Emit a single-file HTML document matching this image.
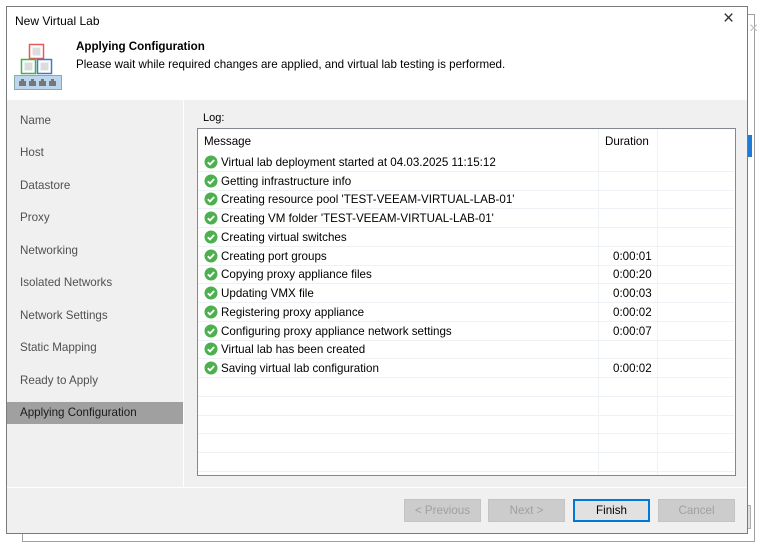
<!DOCTYPE html>
<html><head><meta charset="utf-8"><style>
*{margin:0;padding:0;box-sizing:border-box}
body{width:768px;height:549px;background:#fff;position:relative;overflow:hidden;font-family:"Liberation Sans",sans-serif;font-size:11.6px;color:#000}
.a{position:absolute}
.nav{position:absolute;left:20px;font-size:11.6px;color:#505050}
.row{position:absolute;left:198px;width:536px;height:19px;border-bottom:1px solid #eef1f5}
.row .t{position:absolute;left:23px;top:3px;white-space:nowrap}
.row .d{position:absolute;left:415px;top:3px}
.row svg{position:absolute;left:6px;top:2px}
.btn{position:absolute;top:499px;width:77px;height:23px;background:#cccccc;border:1px solid #c4c4c4;color:#a0a0a0;text-align:center;line-height:21px;font-size:11.6px}
</style></head><body>
<div class="a" style="left:22px;top:14px;width:733px;height:528px;border:1px solid #a0a0a0;background:#fff"></div>
<div class="a" style="left:749px;top:20px;color:#c0c0c0;font-size:16px">×</div>
<div class="a" style="left:748px;top:135px;width:4px;height:22px;background:#1e7ad6"></div>
<div class="a" style="left:748px;top:505px;width:3px;height:24px;border:1px solid #b0b0b0;border-left:none;background:#e0e0e0"></div>
<div class="a" style="left:6px;top:6px;width:742px;height:528px;border:1px solid #7a7a7a;background:#f0f0f0"></div>
<div class="a" style="left:7px;top:7px;width:740px;height:93px;background:#fff"></div>
<div class="a" style="left:15px;top:14px;font-size:12px;color:#000">New Virtual Lab</div>
<div class="a" style="left:723px;top:8px;font-size:19px;color:#333">×</div>
<svg class="a" style="left:13px;top:40px" width="52" height="54" viewBox="0 0 52 54">
<rect x="16.5" y="4.5" width="14" height="14" fill="#fff" stroke="#e8585a" stroke-width="1.5"/><rect x="19.5" y="7.5" width="8" height="8" fill="#dcdcdc"/>
<rect x="8.5" y="19.5" width="14" height="14" fill="#fff" stroke="#3db34a" stroke-width="1.5"/><rect x="11.5" y="22.5" width="8" height="8" fill="#dcdcdc"/>
<rect x="24.5" y="19.5" width="14" height="14" fill="#fff" stroke="#3f7cc8" stroke-width="1.5"/><rect x="27.5" y="22.5" width="8" height="8" fill="#dcdcdc"/>
<rect x="1.5" y="35.5" width="47" height="14" fill="#bcd6ee" stroke="#8aa" stroke-width="1"/>
<g fill="#777"><rect x="6" y="41" width="7" height="5"/><rect x="16" y="41" width="7" height="5"/><rect x="26" y="41" width="7" height="5"/><rect x="36" y="41" width="7" height="5"/>
<rect x="8" y="39" width="3" height="2"/><rect x="18" y="39" width="3" height="2"/><rect x="28" y="39" width="3" height="2"/><rect x="38" y="39" width="3" height="2"/></g>
</svg>
<div class="a" style="left:76px;top:40px;font-weight:bold;font-size:11.6px">Applying Configuration</div>
<div class="a" style="left:76px;top:58px;font-size:11.6px">Please wait while required changes are applied, and virtual lab testing is performed.</div>
<div class="a" style="left:183px;top:100px;width:1px;height:387px;background:#fff"></div>
<div class="a" style="left:7px;top:487px;width:740px;height:1px;background:#fff"></div>
<div class="nav" style="top:114px">Name</div>
<div class="nav" style="top:146px">Host</div>
<div class="nav" style="top:179px">Datastore</div>
<div class="nav" style="top:211px">Proxy</div>
<div class="nav" style="top:244px">Networking</div>
<div class="nav" style="top:276px">Isolated Networks</div>
<div class="nav" style="top:309px">Network Settings</div>
<div class="nav" style="top:341px">Static Mapping</div>
<div class="nav" style="top:374px">Ready to Apply</div>
<div class="a" style="left:7px;top:402px;width:176px;height:22px;background:#a0a0a0"></div>
<div class="nav" style="top:406px;color:#1a1a1a">Applying Configuration</div>
<div class="a" style="left:203px;top:112px;font-size:11px">Log:</div>
<div class="a" style="left:197px;top:128px;width:539px;height:348px;border:1px solid #828790;background:#fff"></div>
<div class="a" style="left:598px;top:129px;width:1px;height:346px;background:#eef1f5"></div>
<div class="a" style="left:657px;top:129px;width:1px;height:346px;background:#eef1f5"></div>
<div class="a" style="left:204px;top:135px">Message</div>
<div class="a" style="left:605px;top:135px">Duration</div>

<div class="row" style="top:153px"><svg width="14" height="14" viewBox="0 0 14 14"><circle cx="7" cy="7" r="6.5" fill="#4cb04f"/><path d="M3.8 7.2l2.2 2.2 4.2-4.4" stroke="#fff" stroke-width="1.8" fill="none"/></svg><span class="t">Virtual lab deployment started at 04.03.2025 11:15:12</span></div>
<div class="row" style="top:172px"><svg width="14" height="14" viewBox="0 0 14 14"><circle cx="7" cy="7" r="6.5" fill="#4cb04f"/><path d="M3.8 7.2l2.2 2.2 4.2-4.4" stroke="#fff" stroke-width="1.8" fill="none"/></svg><span class="t">Getting infrastructure info</span></div>
<div class="row" style="top:190px"><svg width="14" height="14" viewBox="0 0 14 14"><circle cx="7" cy="7" r="6.5" fill="#4cb04f"/><path d="M3.8 7.2l2.2 2.2 4.2-4.4" stroke="#fff" stroke-width="1.8" fill="none"/></svg><span class="t">Creating resource pool 'TEST-VEEAM-VIRTUAL-LAB-01'</span></div>
<div class="row" style="top:209px"><svg width="14" height="14" viewBox="0 0 14 14"><circle cx="7" cy="7" r="6.5" fill="#4cb04f"/><path d="M3.8 7.2l2.2 2.2 4.2-4.4" stroke="#fff" stroke-width="1.8" fill="none"/></svg><span class="t">Creating VM folder 'TEST-VEEAM-VIRTUAL-LAB-01'</span></div>
<div class="row" style="top:228px"><svg width="14" height="14" viewBox="0 0 14 14"><circle cx="7" cy="7" r="6.5" fill="#4cb04f"/><path d="M3.8 7.2l2.2 2.2 4.2-4.4" stroke="#fff" stroke-width="1.8" fill="none"/></svg><span class="t">Creating virtual switches</span></div>
<div class="row" style="top:247px"><svg width="14" height="14" viewBox="0 0 14 14"><circle cx="7" cy="7" r="6.5" fill="#4cb04f"/><path d="M3.8 7.2l2.2 2.2 4.2-4.4" stroke="#fff" stroke-width="1.8" fill="none"/></svg><span class="t">Creating port groups</span><span class="d">0:00:01</span></div>
<div class="row" style="top:265px"><svg width="14" height="14" viewBox="0 0 14 14"><circle cx="7" cy="7" r="6.5" fill="#4cb04f"/><path d="M3.8 7.2l2.2 2.2 4.2-4.4" stroke="#fff" stroke-width="1.8" fill="none"/></svg><span class="t">Copying proxy appliance files</span><span class="d">0:00:20</span></div>
<div class="row" style="top:284px"><svg width="14" height="14" viewBox="0 0 14 14"><circle cx="7" cy="7" r="6.5" fill="#4cb04f"/><path d="M3.8 7.2l2.2 2.2 4.2-4.4" stroke="#fff" stroke-width="1.8" fill="none"/></svg><span class="t">Updating VMX file</span><span class="d">0:00:03</span></div>
<div class="row" style="top:303px"><svg width="14" height="14" viewBox="0 0 14 14"><circle cx="7" cy="7" r="6.5" fill="#4cb04f"/><path d="M3.8 7.2l2.2 2.2 4.2-4.4" stroke="#fff" stroke-width="1.8" fill="none"/></svg><span class="t">Registering proxy appliance</span><span class="d">0:00:02</span></div>
<div class="row" style="top:322px"><svg width="14" height="14" viewBox="0 0 14 14"><circle cx="7" cy="7" r="6.5" fill="#4cb04f"/><path d="M3.8 7.2l2.2 2.2 4.2-4.4" stroke="#fff" stroke-width="1.8" fill="none"/></svg><span class="t">Configuring proxy appliance network settings</span><span class="d">0:00:07</span></div>
<div class="row" style="top:340px"><svg width="14" height="14" viewBox="0 0 14 14"><circle cx="7" cy="7" r="6.5" fill="#4cb04f"/><path d="M3.8 7.2l2.2 2.2 4.2-4.4" stroke="#fff" stroke-width="1.8" fill="none"/></svg><span class="t">Virtual lab has been created</span></div>
<div class="row" style="top:359px"><svg width="14" height="14" viewBox="0 0 14 14"><circle cx="7" cy="7" r="6.5" fill="#4cb04f"/><path d="M3.8 7.2l2.2 2.2 4.2-4.4" stroke="#fff" stroke-width="1.8" fill="none"/></svg><span class="t">Saving virtual lab configuration</span><span class="d">0:00:02</span></div>
<div class="row" style="top:378px"></div>
<div class="row" style="top:397px"></div>
<div class="row" style="top:415px"></div>
<div class="row" style="top:434px"></div>
<div class="row" style="top:453px"></div>

<div class="btn" style="left:404px">&lt; Previous</div>
<div class="btn" style="left:488px">Next &gt;</div>
<div class="btn" style="left:573px;background:#e1e1e1;border:2px solid #0078d7;color:#000;line-height:19px">Finish</div>
<div class="btn" style="left:658px">Cancel</div>
</body></html>
